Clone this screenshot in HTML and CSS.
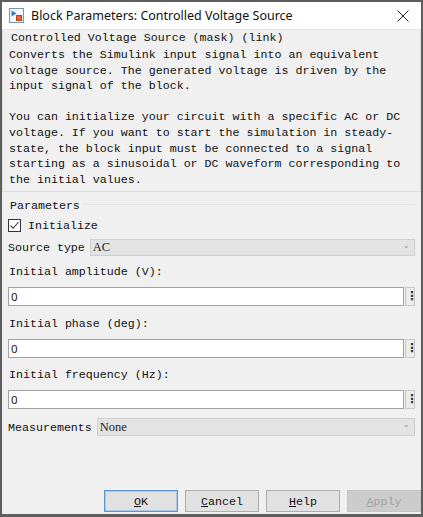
FILE: index.html
```html
<!DOCTYPE html>
<html lang="en">
<head>
    <meta charset="UTF-8">
    <title>Block Parameters: Controlled Voltage Source</title>
    <link rel="stylesheet" href="styles.css">
</head>
<body>
    <div class="window">
        <div class="titlebar">
            <svg class="app-icon" width="15" height="15" viewBox="0 0 15 15">
                <rect x="0.5" y="0.5" width="14" height="14" fill="#f4f8fc" stroke="#7c93b0"/>
                <path d="M2.5 2.5 L7.5 5.5 L2.5 8.5 Z" fill="#2f7fd6"/>
                <rect x="7.5" y="7.5" width="5" height="5" fill="#e8622a" stroke="#b8461a"/>
            </svg>
            <span class="title">Block Parameters: Controlled Voltage Source</span>
            <svg class="close" width="12" height="12" viewBox="0 0 12 12">
                <path d="M0.5 0.5 L11.5 11.5 M11.5 0.5 L0.5 11.5" stroke="#222" stroke-width="1"/>
            </svg>
        </div>

        <div class="body">
            <div class="description">
                <div class="desc-title">Controlled Voltage Source (mask) (link)</div>
                <p>Converts the Simulink input signal into an equivalent
voltage source. The generated voltage is driven by the
input signal of the block.

You can initialize your circuit with a specific AC or DC
voltage. If you want to start the simulation in steady-
state, the block input must be connected to a signal
starting as a sinusoidal or DC waveform corresponding to
the initial values.</p>
            </div>

            <div class="group">
                <div class="group-title"><span>Parameters</span></div>

                <label class="check-row">
                    <span class="checkbox">
                        <svg width="11" height="11" viewBox="0 0 11 11"><path d="M1.5 5.5 L4.2 8.3 L9.5 2" fill="none" stroke="#333" stroke-width="1.1"/></svg>
                    </span>
                    Initialize
                </label>

                <div class="select-row">
                    <span class="field-label">Source type</span>
                    <div class="select"><span>AC</span><span class="chevron">&#8964;</span></div>
                </div>

                <div class="field-label block">Initial amplitude (V):</div>
                <div class="input-row">
                    <div class="input">0</div>
                    <div class="more">&#8942;</div>
                </div>

                <div class="field-label block">Initial phase (deg):</div>
                <div class="input-row">
                    <div class="input">0</div>
                    <div class="more">&#8942;</div>
                </div>

                <div class="field-label block freq">Initial frequency (Hz):</div>
                <div class="input-row">
                    <div class="input">0</div>
                    <div class="more">&#8942;</div>
                </div>

                <div class="select-row measure">
                    <span class="field-label">Measurements</span>
                    <div class="select"><span>None</span><span class="chevron">&#8964;</span></div>
                </div>
            </div>

            <div class="buttons">
                <button class="btn default"><u>O</u>K</button>
                <button class="btn"><u>C</u>ancel</button>
                <button class="btn"><u>H</u>elp</button>
                <button class="btn disabled"><u>A</u>pply</button>
            </div>
        </div>
    </div>
</body>
</html>
```

FILE: styles.css
```css
* {
    margin: 0;
    padding: 0;
    box-sizing: border-box;
}
body {
    background: #5e5e5e;
    width: 423px;
    height: 517px;
    overflow: hidden;
    padding: 2px 2px 3px 2px;
}
.window {
    height: 100%;
    display: flex;
    flex-direction: column;
    background: #f0f0f0;
    font-family: 'Liberation Mono', monospace;
    font-size: 11.65px;
    color: #111;
}
.titlebar {
    height: 28px;
    background: white;
    display: flex;
    align-items: center;
    padding-left: 7px;
    border-bottom: 1px solid #e2e2e2;
}
.app-icon {
    flex: none;
}
.title {
    font-family: 'Noto Sans', sans-serif;
    font-size: 12.5px;
    color: #111;
    margin-left: 7px;
    flex: 1;
}
.close {
    margin-right: 12px;
}
.body {
    flex: 1;
    display: flex;
    flex-direction: column;
}
.description {
    border: 1px solid #dcdcdc;
    border-top: none;
    height: 162px;
    padding: 0 4px 0 6px;
    line-height: 15.6px;
}
.desc-title {
    padding-left: 2px;
    height: 17px;
    line-height: 16px;
}
.description p {
    white-space: pre;
}
.group {
    padding: 0 6px 0 6px;
}
.group-title {
    margin-top: 6px;
    line-height: 16px;
    display: flex;
    align-items: center;
    padding-left: 2px;
}
.group-title::after {
    content: '';
    flex: 1;
    border-top: 1px solid #e4e4e4;
    margin-left: 2px;
    margin-top: -4px;
}
.check-row {
    display: flex;
    align-items: center;
    height: 16px;
    margin-top: 3px;
}
.checkbox {
    width: 13px;
    height: 13px;
    border: 1px solid #333;
    background: white;
    margin-right: 7px;
    display: flex;
    align-items: center;
    justify-content: center;
}
.checkbox svg {
    display: block;
}
.select-row {
    display: flex;
    align-items: center;
    margin-top: 6px;
    height: 17px;
}
.select-row .field-label {
    margin-right: 5px;
}
.select {
    flex: 1;
    height: 17px;
    background: #e3e3e3;
    border: 1px solid #cfcfcf;
    display: flex;
    align-items: center;
    justify-content: space-between;
    padding: 0 4px 0 2px;
    font-family: 'Liberation Serif', serif;
    font-size: 12.5px;
    color: #222;
}
.chevron {
    color: #9a9a9a;
    font-family: 'DejaVu Sans', sans-serif;
    font-size: 9px;
    line-height: 1;
    margin-top: -5px;
}
.measure {
    margin-top: 9px;
    height: 18px;
}
.measure .select {
    height: 18px;
}
.field-label.block {
    padding-left: 1px;
    line-height: 16px;
}
.select-row + .field-label.block {
    margin-top: 8px;
}
.input-row + .field-label.block {
    margin-top: 10px;
}
.input-row + .field-label.freq {
    margin-top: 9px;
}
.input-row {
    display: flex;
    margin-top: 7px;
    height: 19px;
}
.input {
    flex: 1;
    background: white;
    border: 1px solid #a2a2a2;
    font-family: 'Noto Sans', sans-serif;
    font-size: 11.5px;
    line-height: 17px;
    padding-left: 2px;
    color: #222;
}
.more {
    width: 10px;
    margin-left: 1px;
    background: #ececec;
    border: 1px solid #c8c8c8;
    font-family: 'DejaVu Sans', sans-serif;
    font-size: 12px;
    font-weight: bold;
    line-height: 17px;
    text-align: center;
    color: #333;
}
.buttons {
    margin-top: auto;
    display: flex;
    justify-content: flex-end;
    gap: 7px;
    padding: 0 0 2px 0;
}
.btn {
    width: 74px;
    height: 22px;
    background: #e1e1e1;
    border: 1px solid #adadad;
    font-family: 'Liberation Mono', monospace;
    font-size: 11.65px;
    color: #111;
}
.btn u {
    text-underline-offset: 1px;
}
.btn.default {
    border: 1px solid #5b95d6;
    box-shadow: inset 0 0 0 1px #a9c9ec;
}
.btn.disabled {
    background: #cccccc;
    border-color: #c4c4c4;
    color: #a0a0a0;
}
```
